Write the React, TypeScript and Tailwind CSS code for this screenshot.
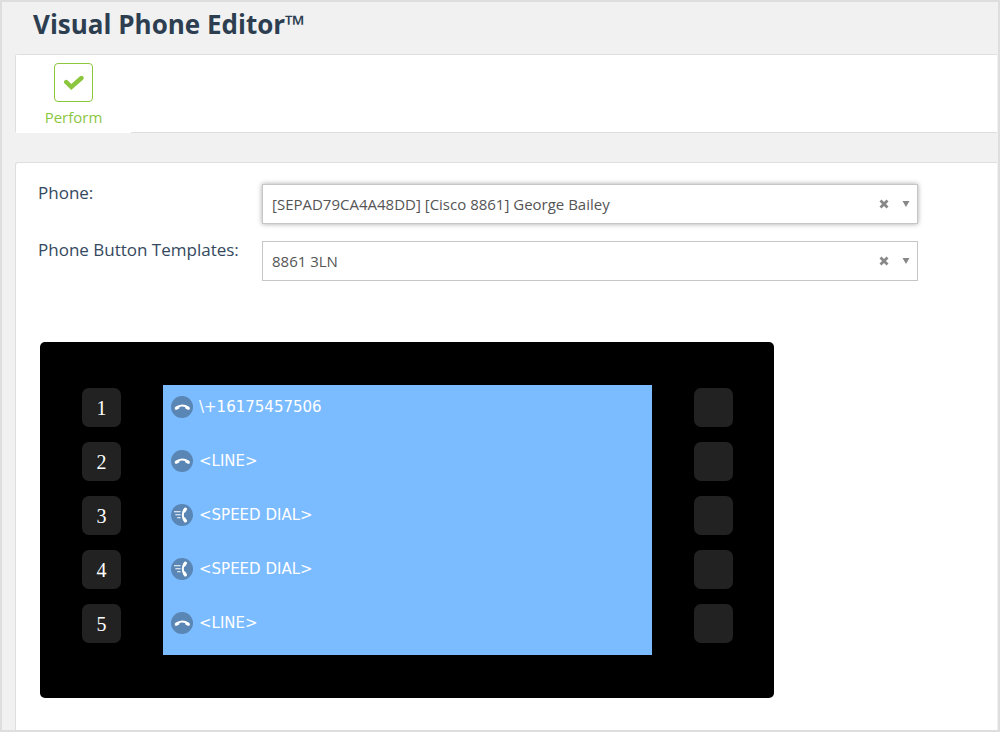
const templates = ['8861 3LN'];
const phones = ['[SEPAD79CA4A48DD] [Cisco 8861] George Bailey'];

const lines = [
  { type: 'line', label: '\\+16175457506' },
  { type: 'line', label: '<LINE>' },
  { type: 'speed', label: '<SPEED DIAL>' },
  { type: 'speed', label: '<SPEED DIAL>' },
  { type: 'line', label: '<LINE>' },
];

function LineIcon() {
  return (
    <svg viewBox="0 0 22 22" className="size-[22px] shrink-0" aria-hidden="true">
      <circle cx="11" cy="11" r="11" fill="#5986b5" />
      <path d="M4.8 11.8 Q11 7.2 17.8 11.8" fill="none" stroke="#fff" strokeWidth="2" />
      <path d="M5.2 12.3 L7 11.5 M17.4 12.3 L15.6 11.5" fill="none" stroke="#fff" strokeWidth="3" strokeLinecap="round" />
    </svg>
  );
}

function SpeedDialIcon() {
  return (
    <svg viewBox="0 0 22 22" className="size-[22px] shrink-0" aria-hidden="true">
      <circle cx="11" cy="11" r="11" fill="#5986b5" />
      <path d="M3 7.8 H9.6 M4.3 10.8 H9.6 M6.2 13.8 H9.6" fill="none" stroke="#fff" strokeWidth="1.1" />
      <path d="M13.6 5.6 Q10 11 13.6 16.6" fill="none" stroke="#fff" strokeWidth="2" />
      <path d="M14.4 5.2 L13.3 7 M14.4 16.8 L13.3 15" fill="none" stroke="#fff" strokeWidth="3.2" strokeLinecap="round" />
    </svg>
  );
}

function SelectField({ id, label, options, active }: { id: string; label: string; options: string[]; active?: boolean }) {
  return (
    <div className="flex items-start">
      <label htmlFor={id} className="w-56 shrink-0 text-[17px] leading-[18px] text-[#34495e]">
        {label}
      </label>
      <div className="relative flex-1">
        <select
          id={id}
          className={`block h-10 w-full appearance-none border border-[#c6c6c6] bg-white pl-[9px] pr-16 pt-px text-[15px] text-[#555] outline-none ${
            active ? 'shadow-[0_0_5px_rgba(0,0,0,0.35)]' : ''
          }`}
        >
          {options.map((option) => (
            <option key={option}>{option}</option>
          ))}
        </select>
        <button type="button" aria-label={`Clear ${label}`} className="absolute right-[29px] top-[15px]">
          <svg viewBox="0 0 10 10" className="size-[10px]">
            <path d="M1.5 1.5 L8.5 8.5 M8.5 1.5 L1.5 8.5" stroke="#888" strokeWidth="2.8" />
          </svg>
        </button>
        <svg viewBox="0 0 8 6" className="pointer-events-none absolute right-2 top-[17px] h-[6px] w-2">
          <path d="M0.5 0 H7.5 L4 6 Z" fill="#888" />
        </svg>
      </div>
    </div>
  );
}

function Phone() {
  return (
    <div className="flex w-full max-w-[734px] justify-between rounded-[5px] bg-black py-[43px] pl-[42px] pr-[41px]">
      <div className="flex flex-col gap-[15px] pt-[3px]">
        {lines.map((_, i) => (
          <button
            key={i}
            type="button"
            className="size-[39px] rounded-[7px] bg-[#222] font-['Liberation_Serif',serif] text-xl text-white"
          >
            {i + 1}
          </button>
        ))}
      </div>
      <ul className="mx-[42px] flex-1 bg-[#7bbbff]">
        {lines.map((line, i) => (
          <li key={i} className="flex h-[54px] gap-1.5 px-2 pt-[11px]">
            {line.type === 'line' ? <LineIcon /> : <SpeedDialIcon />}
            <span className="font-['DejaVu_Sans',sans-serif] text-[15px] leading-[22px] text-white">{line.label}</span>
          </li>
        ))}
      </ul>
      <div className="flex flex-col gap-[15px] pt-[3px]">
        {lines.map((_, i) => (
          <button key={i} type="button" aria-label={`Right key ${i + 1}`} className="block size-[39px] rounded-[7px] bg-[#222]" />
        ))}
      </div>
    </div>
  );
}

export default function App() {
  return (
    <div className="flex min-h-screen flex-col border-2 border-[#dedede] bg-[#f1f1f1] pl-[13px] pr-px font-['Open_Sans',sans-serif]">
      <h1 className="px-[18px] pt-1 text-[26px] font-bold leading-9 text-[#2c3e50]">Visual Phone Editor™</h1>

      <div className="mt-3 flex h-[79px] rounded-l-[3px] border border-r-0 border-[#dedede] bg-white">
        <button type="button" className="-mb-px flex w-[115px] flex-col items-center bg-white pt-2 text-[#8cc63f]">
          <span className="flex size-[39px] items-center justify-center rounded border border-[#8cc63f]">
            <svg viewBox="0 0 20 16" className="h-4 w-5">
              <path d="M2.2 7 L7.3 12 L17.5 3" fill="none" stroke="#8cc63f" strokeWidth="4.4" strokeLinecap="round" />
            </svg>
          </span>
          <span className="mt-1 text-[15px] leading-[22px]">Perform</span>
        </button>
      </div>

      <main className="mt-[29px] flex-1 rounded-tl-[3px] border-l border-t border-[#dedede] bg-white pb-8 pt-[21px]">
        <div className="flex flex-col gap-[17px] pl-[22px] pr-[79px]">
          <SelectField id="phone" label="Phone:" options={phones} active />
          <SelectField id="template" label="Phone Button Templates:" options={templates} />
        </div>
        <div className="mt-[61px] px-6">
          <Phone />
        </div>
      </main>
    </div>
  );
}
